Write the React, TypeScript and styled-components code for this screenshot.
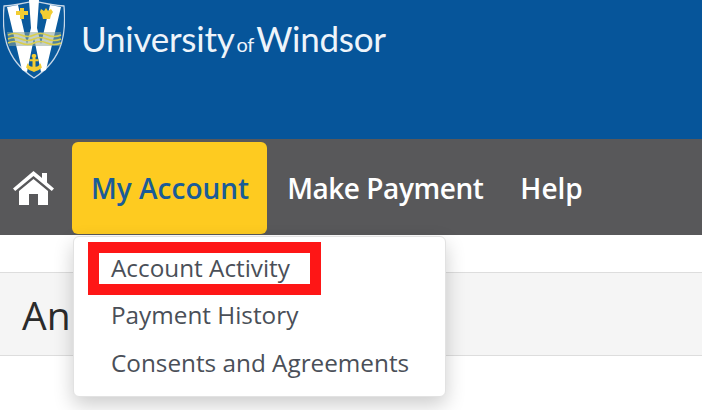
import React from "react";
import styled, { createGlobalStyle } from "styled-components";

const Global = createGlobalStyle`
  html, body { margin: 0; padding: 0; background: #fff; }
  body { width: 702px; height: 410px; overflow: hidden; font-family: "Open Sans", "Liberation Sans", sans-serif; }
`;
const Page = styled.div`
  width: 702px; height: 410px; overflow: hidden; background: #fff;
  display: flex; flex-direction: column;
`;
const Header = styled.header`
  height: 139px; background: #06559a; display: flex; align-items: flex-start; gap: 16px; padding-left: 3px; box-sizing: border-box;
`;
const Wordmark = styled.div`
  display: flex; align-items: baseline; color: #eef4fa; font-family: "Lato", sans-serif; padding-top: 15px;
  font-size: 35px; line-height: 46px; letter-spacing: -0.25px;
`;
const Small = styled.span`
  font-size: 20px; margin: 0 2px 0 2px;
`;
const Nav = styled.nav`
  height: 96px; background: #58585a; display: flex; align-items: center; box-sizing: border-box; padding: 2px 0 1px 13px;
`;
const HomeLink = styled.a`
  display: flex; width: 41px; margin-right: 18px; color: #fff;
`;
const Item = styled.div`
  position: relative; margin-right: 1px;
`;
const NavLink = styled.a<{ $active?: boolean; $tight?: boolean }>`
  display: flex; align-items: center; height: 92px; box-sizing: border-box;
  padding: 0 18px 0 19px;
  border-radius: 6px; font-size: 28px; font-weight: 600; white-space: nowrap;
  letter-spacing: ${(p) => (p.$tight ? "-0.45px" : "0")};
  color: ${(p) => (p.$active ? "#1a5c97" : "#fff")};
  background: ${(p) => (p.$active ? "#fecb20" : "transparent")};
`;
const Menu = styled.div`
  position: absolute; z-index: 3; left: 1px; top: 94px; width: 373px; height: 161px; box-sizing: border-box;
  padding: 7px 0; background: #fff; border-radius: 6px; border: 1px solid #e2e2e2;
  box-shadow: 0 8px 20px rgba(0,0,0,.2); display: flex; flex-direction: column;
`;
const MenuEntry = styled.a`
  height: 47.5px; line-height: 48px; padding-left: 37px; font-size: 24.3px; color: #4a4f58; white-space: nowrap;
`;
const Highlight = styled.div`
  position: absolute; left: 14px; top: 5px; width: 233px; height: 53px; box-sizing: border-box;
  border: 11px solid #fe1616;
`;
const Content = styled.main`
  flex: 1; padding-top: 37px;
`;
const Band = styled.div`
  height: 84px; box-sizing: border-box; background: #f5f5f5; border-top: 1px solid #ddd; border-bottom: 1px solid #ddd;
  padding-left: 22px; display: flex; align-items: center;
`;
const Title = styled.h1`
  margin: 0; font-size: 39px; font-weight: 500; color: #2b2b2b; white-space: nowrap;
`;

const Crest = () => (
  <svg width="62" height="80" viewBox="0 0 62 80">
    <path d="M1 6 C14 5 22 3 31 1 C40 3 48 5 61 6 C63 30 62 58 31 78 C0 58 -1 30 1 6Z" fill="#0a5a9d" stroke="#c8d8e8" strokeWidth="1.3" />
    <path d="M4 7 L15 5 L24 44 L28 28 L26 0 L36 0 L34 28 L38 44 L47 5 L58 7 L43 70 L38 72 L31 38 L24 72 L19 70 Z" fill="#fff" />
    <path d="M4 32 H58 L57 46 H6Z" fill="#8fa69a" opacity=".55" />
    <g fill="none" stroke="#d9ce4e" strokeWidth="1.7">
      <path d="M5 35 q6 -3 13 0 t13 0 t13 0 t14 0" />
      <path d="M5 39 q6 -3 13 0 t13 0 t13 0 t14 0" />
      <path d="M5 43 q6 -3 13 0 t13 0 t13 0 t14 0" />
    </g>
    <path d="M17 8 h4 v3 h4 v4 h-4 v4 h-4 v-4 h-4 v-4 h4Z" fill="#f2cd33" />
    <path d="M38 9 l3 2 2 -3 2 3 3 -2 2 3 -2 3 -1 4 h-7 l-1 -4 -2 -3Z" fill="#f2cd33" />
    <path d="M31 54 a2 2 0 0 1 1.500 3.600 v1.600 h3 v2 h-3 v5.600 c2.500 -.3 4 -1.700 5 -3.600 l1.400 4.400 c-2 2.600 -5 3 -7.900 4.400 c-2.900 -1.400 -5.900 -1.800 -7.900 -4.400 l1.400 -4.400 c1 1.900 2.500 3.300 5 3.600 v-5.600 h-3 v-2 h3 v-1.600 a2 2 0 0 1 1.500 -3.600Z" fill="#f2cd33" />
  </svg>
);

const HomeIcon = () => (
  <svg width="41" height="36" viewBox="0 0 41 36">
    <path fill="#fff" d="M20.500 1 L29 8 V3 H34 V12.500 L41 18.500 L38.800 21 L20.500 6 L2.200 21 L0 18.500Z" />
    <path fill="#fff" d="M20.500 9 L35 21 V35 H25 V24 H16 V35 H6 V21Z" />
  </svg>
);

export default function App() {
  return (
    <Page>
      <Global />
      <Header>
        <Crest />
        <Wordmark>University<Small>of</Small>Windsor</Wordmark>
      </Header>
      <Nav>
        <HomeLink><HomeIcon /></HomeLink>
        <Item>
          <NavLink $active>My Account</NavLink>
          <Menu>
            <MenuEntry>Account Activity</MenuEntry>
            <MenuEntry>Payment History</MenuEntry>
            <MenuEntry>Consents and Agreements</MenuEntry>
            <Highlight />
          </Menu>
        </Item>
        <NavLink $tight>Make Payment</NavLink>
        <NavLink>Help</NavLink>
      </Nav>
      <Content>
        <Band><Title>An</Title></Band>
      </Content>
    </Page>
  );
}
